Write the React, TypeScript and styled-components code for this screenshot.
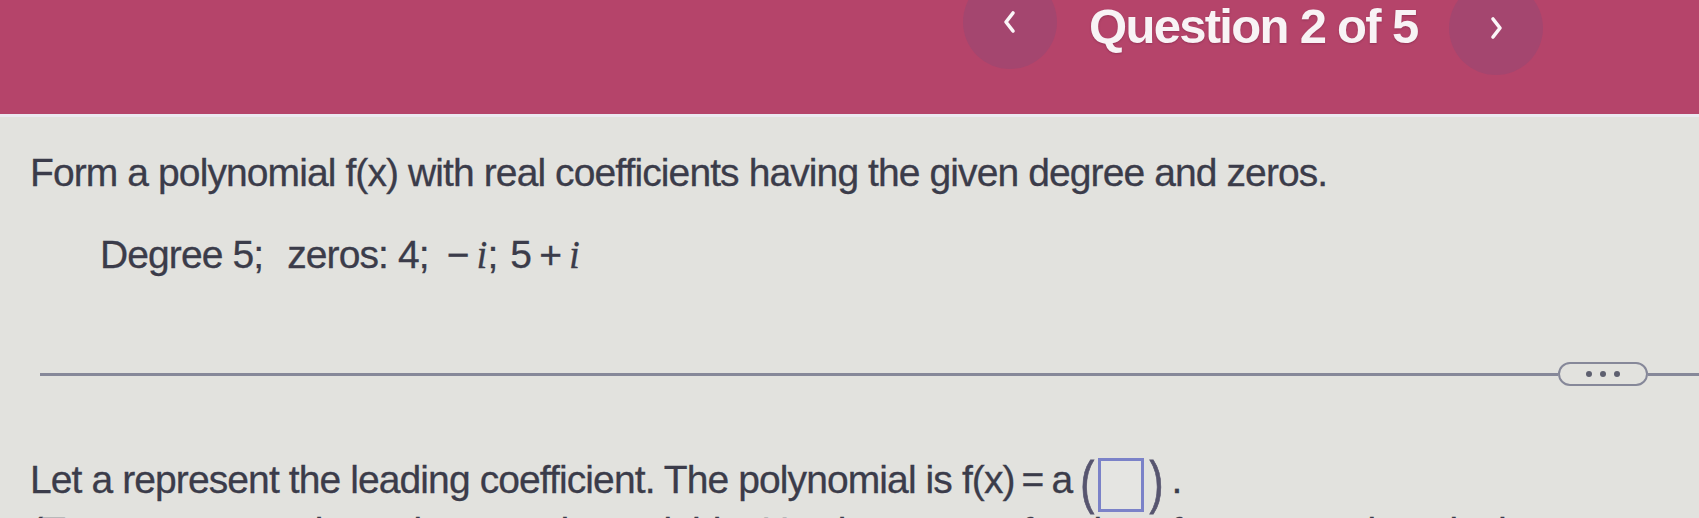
import styled, { createGlobalStyle } from 'styled-components';

const GlobalStyle = createGlobalStyle`
  html, body {
    margin: 0;
    padding: 0;
    height: 518px;
    overflow: hidden;
    background: #e2e2de;
  }
  body {
    font-family: "Liberation Sans", Arial, sans-serif;
  }
`;

function Chevron({ dir }: { dir: 'left' | 'right' }) {
  const points = dir === 'left' ? '11,3 4,12 11,21' : '5,3 12,12 5,21';
  return (
    <svg width="16" height="24" viewBox="0 0 16 24">
      <polyline
        points={points}
        fill="none"
        stroke="#fbf6f8"
        strokeWidth="3.6"
        strokeLinecap="round"
        strokeLinejoin="round"
      />
    </svg>
  );
}

function App() {
  return (
    <Page>
      <GlobalStyle />
      <Header>
        <NavButton $top={-25} aria-label="Previous question">
          <Chevron dir="left" />
        </NavButton>
        <Title>Question 2 of 5</Title>
        <NavButton $top={-19} aria-label="Next question">
          <Chevron dir="right" />
        </NavButton>
      </Header>

      <Content>
        <Prompt>Form a polynomial f(x) with real coefficients having the given degree and zeros.</Prompt>
        <Given>
          Degree 5;<Gap $w={24} />zeros: 4;<Gap $w={18} />−<Gap $w={8} />
          <MathVar>i</MathVar>;<Gap $w={13} />5<Gap $w={8} />+<Gap $w={8} />
          <MathVar>i</MathVar>
        </Given>
      </Content>

      <DividerRow>
        <Rule />
        <MoreButton aria-label="Show more">
          <Dot />
          <Dot />
          <Dot />
        </MoreButton>
        <RuleTail />
      </DividerRow>

      <Content>
        <Answer>
          Let a represent the leading coefficient. The polynomial is f(x)<Gap $w={7} />=<Gap $w={8} />a
          <Gap $w={6} />
          <Paren>(</Paren>
          <AnswerBox />
          <Paren>)</Paren>
          <Gap $w={7} />.
        </Answer>
        <Hint>
          (Type an expression using x as the variable. Use integers or fractions for any numbers in
          the expression. Simplify your answer.)
        </Hint>
      </Content>
    </Page>
  );
}

const Page = styled.div`
  width: 1699px;
  height: 518px;
  overflow: hidden;
  background: #e2e2de;
  color: #3b3c4a;
`;

const Header = styled.header`
  display: flex;
  align-items: flex-start;
  gap: 32px;
  height: 114px;
  padding-left: 963px;
  background: #b5446a;
  border-bottom: 3px solid #ebe9f0;
  overflow: hidden;
`;

const NavButton = styled.button<{ $top: number }>`
  display: flex;
  align-items: center;
  justify-content: center;
  flex: none;
  width: 94px;
  height: 94px;
  margin-top: ${(p) => p.$top}px;
  padding: 0;
  border: none;
  border-radius: 50%;
  background: #a4466f;
  cursor: pointer;
`;

const Title = styled.h1`
  margin: 2px 0 0;
  font-size: 49px;
  line-height: 49px;
  font-weight: 700;
  letter-spacing: -1.7px;
  color: #f8f3f5;
  text-shadow: 0 1px 2px rgba(90, 20, 50, 0.35);
  white-space: nowrap;
`;

const Content = styled.div`
  padding-left: 30px;
`;

const TextLine = styled.p`
  margin: 0;
  font-size: 39px;
  line-height: 46px;
  letter-spacing: -0.9px;
  white-space: nowrap;
  -webkit-text-stroke: 0.3px #3b3c4a;
`;

const Prompt = styled(TextLine)`
  margin-top: 33px;
`;

const Given = styled(TextLine)`
  margin-top: 36px;
  padding-left: 70px;
`;

const Gap = styled.span<{ $w: number }>`
  display: inline-block;
  width: ${(p) => p.$w}px;
`;

const MathVar = styled.i`
  font-family: "Liberation Serif", "Times New Roman", serif;
  font-style: italic;
  letter-spacing: 0;
`;

const DividerRow = styled.div`
  display: flex;
  align-items: center;
  height: 24px;
  margin-top: 84px;
  padding-left: 40px;
`;

const Rule = styled.div`
  flex: 1;
  height: 3px;
  background: #868899;
`;

const RuleTail = styled(Rule)`
  flex: none;
  width: 51px;
`;

const MoreButton = styled.button`
  display: flex;
  align-items: center;
  justify-content: center;
  gap: 8px;
  flex: none;
  width: 90px;
  height: 24px;
  padding: 0;
  border: 2px solid #868899;
  border-radius: 12px;
  background: transparent;
`;

const Dot = styled.span`
  width: 6px;
  height: 6px;
  border-radius: 50%;
  background: #5e6070;
`;

const Answer = styled(TextLine)`
  margin-top: 71px;
`;

const Paren = styled.span`
  display: inline-block;
  font-size: 42px;
  color: #57556f;
  -webkit-text-stroke: 0.6px #57556f;
  transform: scaleY(1.35);
  vertical-align: -4px;
  margin: 0 2px;
`;

const AnswerBox = styled.span`
  display: inline-block;
  box-sizing: border-box;
  width: 46px;
  height: 54px;
  vertical-align: -19px;
  margin: 0 3px;
  border: 3px solid #7b82c8;
  background: #e5e5e2;
`;

const Hint = styled(TextLine)`
  margin-top: -3px;
  white-space: normal;
  padding-right: 60px;
`;

export default App;
